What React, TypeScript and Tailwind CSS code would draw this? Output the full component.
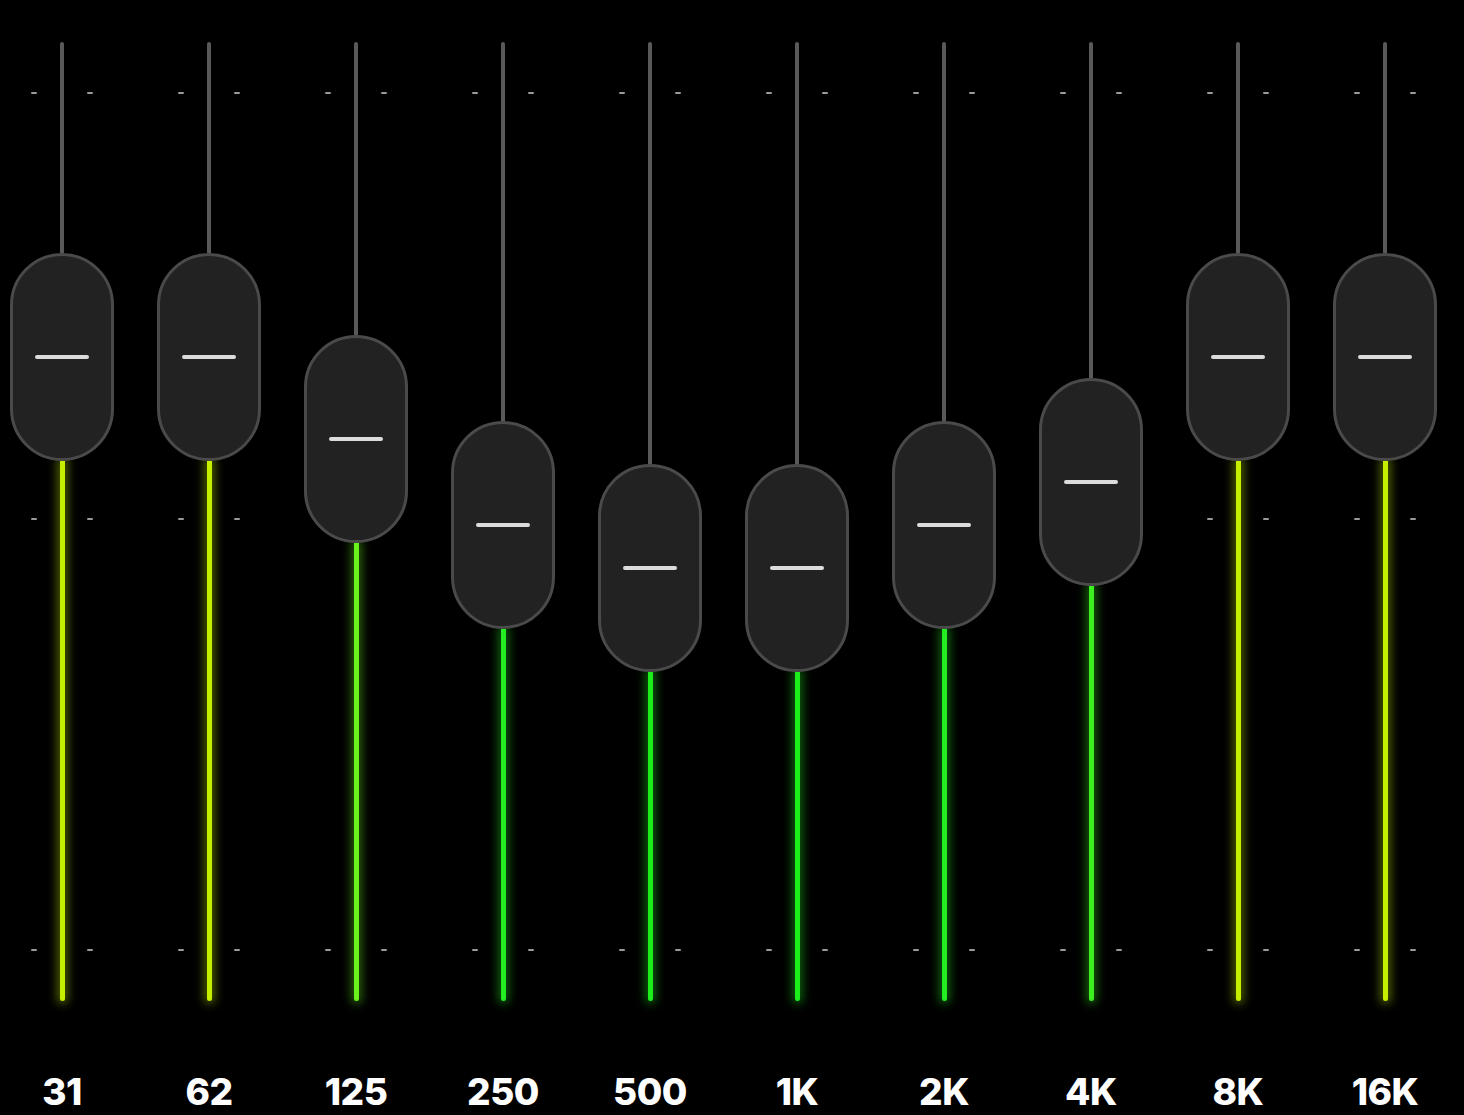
import React from "react";

type Band = {
  label: string;
  top: number; // knob top, px from page top
  color: string;
  glow: string;
};

const bands: Band[] = [
  { label: "31", top: 253, color: "bg-[#c4f000]", glow: "shadow-[0_0_10px_3px_rgba(196,240,0,0.4)]" },
  { label: "62", top: 253, color: "bg-[#c4f000]", glow: "shadow-[0_0_10px_3px_rgba(196,240,0,0.4)]" },
  { label: "125", top: 335, color: "bg-[#6af21c]", glow: "shadow-[0_0_10px_3px_rgba(106,242,28,0.4)]" },
  { label: "250", top: 421, color: "bg-[#22ee22]", glow: "shadow-[0_0_10px_3px_rgba(34,238,34,0.4)]" },
  { label: "500", top: 464, color: "bg-[#1cee1c]", glow: "shadow-[0_0_10px_3px_rgba(28,238,28,0.4)]" },
  { label: "1K", top: 464, color: "bg-[#1cee1c]", glow: "shadow-[0_0_10px_3px_rgba(28,238,28,0.4)]" },
  { label: "2K", top: 421, color: "bg-[#22ee22]", glow: "shadow-[0_0_10px_3px_rgba(34,238,34,0.4)]" },
  { label: "4K", top: 378, color: "bg-[#3cf020]", glow: "shadow-[0_0_10px_3px_rgba(60,240,32,0.4)]" },
  { label: "8K", top: 253, color: "bg-[#c4f000]", glow: "shadow-[0_0_10px_3px_rgba(196,240,0,0.4)]" },
  { label: "16K", top: 253, color: "bg-[#c4f000]", glow: "shadow-[0_0_10px_3px_rgba(196,240,0,0.4)]" },
];

const TRACK_TOP = 42;
const TRACK_BOTTOM = 1001;
const KNOB_H = 208;
const TICKS = [93, 519, 950];

function Fader({ band }: { band: Band }) {
  const upper = band.top - TRACK_TOP;
  const lower = TRACK_BOTTOM - band.top - KNOB_H;
  return (
    <div className="relative flex w-[104px] flex-col items-center">
      {/* scale marks either side of the track, behind the knob */}
      {TICKS.map((y) => (
        <React.Fragment key={y}>
          <div
            className="absolute left-[21px] z-0 h-[2px] w-[6px] rounded-full bg-[#9a9a9a]"
            style={{ top: y - 1 }}
          />
          <div
            className="absolute left-[77px] z-0 h-[2px] w-[6px] rounded-full bg-[#9a9a9a]"
            style={{ top: y - 1 }}
          />
        </React.Fragment>
      ))}

      <div className="h-[42px]" />
      <div className="w-[4px] rounded-t-full bg-[#595959]" style={{ height: upper }} />
      <div className="relative z-10 flex h-[208px] w-[104px] items-center justify-center rounded-full border-[3px] border-[#4a4a4a] bg-[#222222]">
        <div className="h-[4px] w-[54px] rounded-full bg-[#dcdcdc]" />
      </div>
      <div
        className={`w-[5px] rounded-b-full ${band.color} ${band.glow}`}
        style={{ height: lower }}
      />

      <div className="mt-[71px] text-[37px] font-extrabold leading-[40px] tracking-[-0.5px] text-white [font-family:Inter,'Noto_Sans',sans-serif]">
        {band.label}
      </div>
    </div>
  );
}

export default function App() {
  return (
    <div className="h-[1115px] w-[1464px] overflow-hidden bg-black">
      <div className="flex gap-[43px] pl-[10px]">
        {bands.map((b) => (
          <Fader key={b.label} band={b} />
        ))}
      </div>
    </div>
  );
}
